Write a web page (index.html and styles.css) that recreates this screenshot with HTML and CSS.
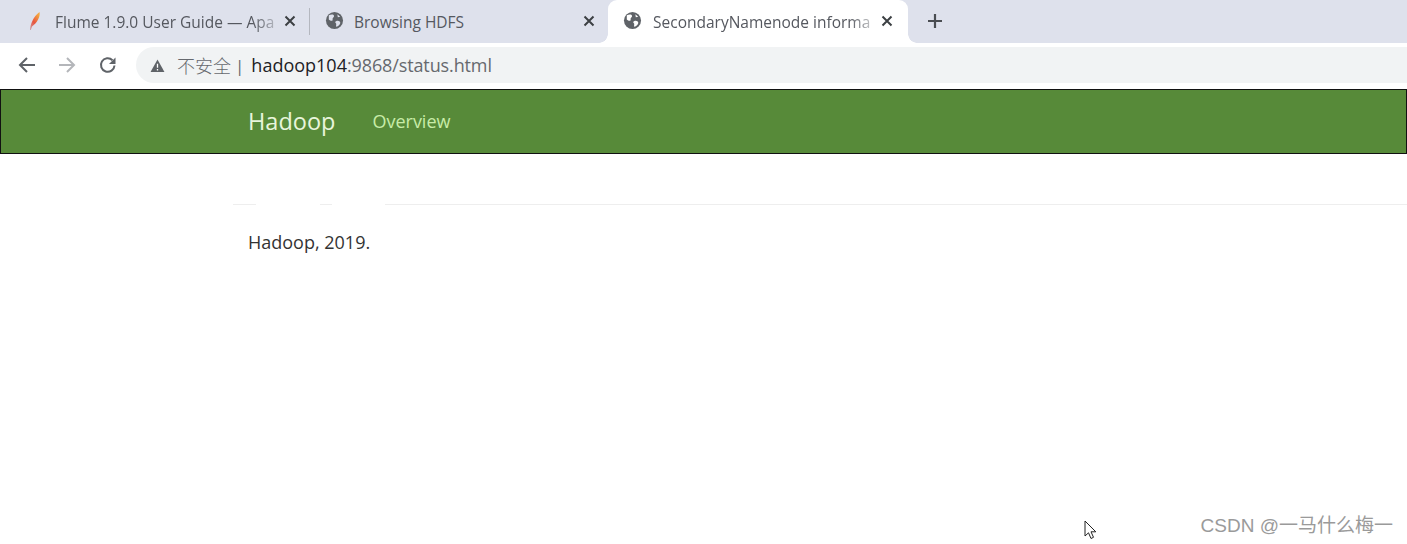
FILE: index.html
```html
<!DOCTYPE html>
<html lang="en">
<head>
<meta charset="utf-8">
<title>SecondaryNamenode information</title>
<link rel="stylesheet" href="styles.css">
</head>
<body>
<div class="tabstrip">
  <div class="tab tab-first">
    <svg class="favicon feather" viewBox="0 0 16 20"><defs><linearGradient id="f" x1="0" y1="1" x2="0.6" y2="0"><stop offset="0" stop-color="#c9a0a8"/><stop offset="0.5" stop-color="#e8553f"/><stop offset="1" stop-color="#f4a640"/></linearGradient></defs><path d="M3 19C3.500 13 6 6 12.500 1C13.500 6 10 12 5 15.500L3.800 19Z" fill="url(#f)"/></svg>
    <span class="tab-title">Flume 1.9.0 User Guide — Apa</span>
    <svg class="close" viewBox="0 0 12 12"><path d="M1.500 1.500L10.500 10.500M10.500 1.500L1.500 10.500"/></svg>
  </div>
  <div class="sep"></div>
  <div class="tab tab-second">
    <svg class="favicon" viewBox="0 0 20 20"><circle cx="10" cy="10" r="9" fill="#5f6368"/><path d="M4 4.500C7 3 9 3.500 9.500 5C10 6.500 7.500 7 8 9C8.500 11 5.500 10.500 4 9ZM12 10.500C14.500 10 16.500 11 16 13C15.500 15 13 17 12 16.500C11 16 12.500 14 11.500 13C10.500 12 10.500 11 12 10.500ZM13 3.500L16 6L13.500 6.500Z" fill="#dee1ec"/></svg>
    <span class="tab-title">Browsing HDFS</span>
    <svg class="close" viewBox="0 0 12 12"><path d="M1.500 1.500L10.500 10.500M10.500 1.500L1.500 10.500"/></svg>
  </div>
  <div class="tab tab-active">
    <svg class="favicon" viewBox="0 0 20 20"><circle cx="10" cy="10" r="9" fill="#5f6368"/><path d="M4 4.500C7 3 9 3.500 9.500 5C10 6.500 7.500 7 8 9C8.500 11 5.500 10.500 4 9ZM12 10.500C14.500 10 16.500 11 16 13C15.500 15 13 17 12 16.500C11 16 12.500 14 11.500 13C10.500 12 10.500 11 12 10.500ZM13 3.500L16 6L13.500 6.500Z" fill="#fff"/></svg>
    <span class="tab-title">SecondaryNamenode informa</span>
    <svg class="close" viewBox="0 0 12 12"><path d="M1.500 1.500L10.500 10.500M10.500 1.500L1.500 10.500"/></svg>
  </div>
  <svg class="newtab" viewBox="0 0 16 16"><path d="M8 1V15M1 8H15"/></svg>
</div>
<div class="toolbar">
  <svg class="nav-icon" viewBox="0 0 18 18"><path d="M17 9H2M9 2L2 9L9 16"/></svg>
  <svg class="nav-icon nav-disabled" viewBox="0 0 18 18"><path d="M1 9H16M9 2L16 9L9 16"/></svg>
  <svg class="nav-icon nav-reload" viewBox="0 0 18 18"><path d="M15.500 9.500A6.800 6.800 0 1 1 13.500 4.200"/><path class="fill" d="M16.500 1.500V8H10Z"/></svg>
  <div class="omnibox">
    <svg class="warn" viewBox="0 0 16 14"><path d="M8 0.500L15.500 14H0.500Z" fill="#5f6368"/><path d="M8 5V9.500M8 10.800V12.300" stroke="#fff" stroke-width="1.400"/></svg>
    <span class="insecure">不安全</span>
    <span class="bar">|</span>
    <span class="host">hadoop104</span><span class="path">:9868/status.html</span>
  </div>
</div>
<nav class="navbar">
  <a class="brand">Hadoop</a>
  <a class="nav-link">Overview</a>
</nav>
<main class="container">
  <hr class="rule">
  <footer class="footer">Hadoop, 2019.</footer>
</main>
<svg class="cursor" viewBox="0 0 14 20"><path d="M1 1V16L4.500 12.800L7 18.500L9.500 17.300L7 11.800H11.800Z" fill="#fff" stroke="#222" stroke-width="1"/></svg>
<div class="watermark">CSDN @一马什么梅一</div>
</body>
</html>
```
FILE: styles.css
```css
* { box-sizing: border-box; }
html, body { margin: 0; height: 544px; overflow: hidden; background: #fff; }
body { font-family: "Open Sans", "Noto Sans CJK SC", sans-serif; color: #333; position: relative; }

.tabstrip { height: 43px; background: #dee1ec; display: flex; align-items: center; position: relative; }
.tab { height: 43px; display: flex; align-items: center; flex: none; padding-bottom: 2px; }
.tab-first { width: 309px; padding-left: 27px; padding-right: 13px; }
.tab-second { width: 298px; padding-left: 15px; padding-right: 13px; }
.tab-active { width: 300px; padding-left: 15px; padding-right: 15px; background: #fff; border-radius: 9px 9px 0 0; position: relative; }
.tab-active::before, .tab-active::after { content: ""; position: absolute; bottom: 0; width: 9px; height: 9px; background: radial-gradient(circle at 0 0, transparent 8.500px, #fff 9px); }
.tab-active::before { left: -9px; }
.tab-active::after { right: -9px; transform: scaleX(-1); }
.sep { width: 1px; height: 27px; background: #b4b7bf; flex: none; }
.favicon { width: 19px; height: 19px; flex: none; margin-right: 10px; }
.tab-active .favicon { margin-right: 11px; }
.feather { width: 16px; height: 20px; margin-right: 12px; }
.tab-title { flex: 1; min-width: 0; overflow: hidden; white-space: nowrap; font-size: 15.500px; color: #55585f; margin-top: 2px; }
.tab-first .tab-title, .tab-active .tab-title { -webkit-mask-image: linear-gradient(90deg, #000 0, #000 90%, rgba(0,0,0,0.35)); mask-image: linear-gradient(90deg, #000 0, #000 90%, rgba(0,0,0,0.35)); }
.close { width: 12px; height: 12px; flex: none; margin-left: 10px; }
.close path { stroke: #3c4043; stroke-width: 2; fill: none; }
.newtab { width: 16px; height: 16px; margin: 0 0 2px 19px; flex: none; }
.newtab path { stroke: #4a4d52; stroke-width: 2.200; fill: none; }

.toolbar { height: 46px; background: #fff; display: flex; align-items: center; padding: 0 0 2px 18px; gap: 22px; }
.nav-icon { width: 18px; height: 18px; flex: none; }
.nav-icon path { stroke: #5f6368; stroke-width: 2; fill: none; }
.nav-icon .fill { fill: #5f6368; stroke: none; }
.nav-icon.nav-disabled path { stroke: #b4b6ba; }
.nav-reload { margin-left: 1px; }
.omnibox { flex: 1; height: 36px; margin-left: -3px; background: #f1f3f4; border-radius: 18px 0 0 18px; display: flex; align-items: center; padding-left: 14px; white-space: nowrap; font-size: 18px; }
.warn { width: 15px; height: 13px; flex: none; margin-right: 12px; }
.insecure { color: #66696e; font-family: "Noto Sans CJK SC", sans-serif; font-size: 18px; font-weight: 300; }
.bar { color: #66696e; margin: 0 7px 0 4px; font-size: 17px; }
.host { color: #202124; }
.path { color: #66696e; letter-spacing: -0.120px; }

.navbar { height: 65px; background: #578a39; border: 1px solid #111; display: flex; align-items: center; padding: 0 0 2px 247px; }
.brand { font-size: 23.500px; color: #e8f5dc; margin-right: 37px; }
.nav-link { font-size: 18px; color: #c8eca8; }

.container { padding-left: 233px; }
.rule { border: 0; height: 1px; background: linear-gradient(90deg, #eee 0, #eee 23px, #fff 23px, #fff 87px, #eee 87px, #eee 99px, #fff 99px, #fff 152px, #eee 152px); margin: 50px 0 0; }
.footer { padding: 25px 0 0 15px; font-size: 18px; line-height: 24px; color: #333; }

.cursor { position: absolute; left: 1084px; top: 520px; width: 14px; height: 20px; }
.watermark { position: absolute; right: 14px; top: 513px; font-size: 19px; line-height: 26px; color: #9a9a9a; font-family: "Liberation Sans", "Noto Sans CJK SC", sans-serif; }
```
